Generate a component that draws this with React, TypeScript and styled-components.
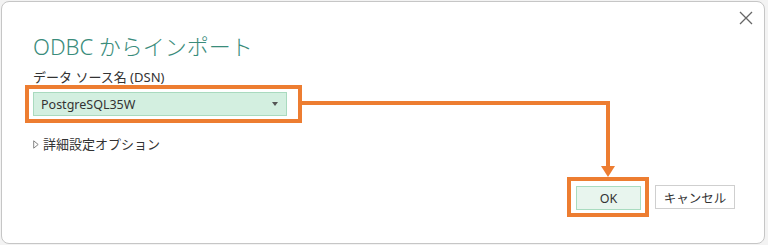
import React from 'react'
import styled, { createGlobalStyle } from 'styled-components'

const GlobalStyle = createGlobalStyle`
    html, body {
        margin: 0;
        padding: 0;
        background: #f3f3f3;
    }
    body {
        font-family: "Noto Sans", "Noto Sans CJK JP", sans-serif;
        color: #333;
    }
`

const orange = '#ed7d31'

const Page = styled.div`
    width: 768px;
    height: 245px;
    padding: 1px 0 0 1px;
    box-sizing: border-box;
`

const Dialog = styled.div`
    position: relative;
    width: 764px;
    height: 243px;
    box-sizing: border-box;
    border: 1px solid #c6c6c6;
    border-radius: 8px;
    background: #fff;
    padding: 0 29px 0 31px;
    display: flex;
    flex-direction: column;
`

const Header = styled.div`
    display: flex;
    justify-content: space-between;
    align-items: flex-start;
    margin-right: -20px;
`

const Title = styled.h1`
    margin: 30px 0 0 0;
    font-size: 22px;
    line-height: 28px;
    font-weight: 300;
    color: #3a8c7b;
`

const CloseButton = styled.button`
    margin-top: 7px;
    width: 18px;
    height: 18px;
    padding: 0;
    border: none;
    background: none;
    display: flex;
    align-items: center;
    justify-content: center;
`

const Label = styled.div`
    margin-top: 9px;
    font-size: 13px;
    line-height: 16px;
    color: #333;
`

const Highlight = styled.div<{ $pad: string; $offset?: number }>`
    display: inline-flex;
    align-self: flex-start;
    border: 4px solid ${orange};
    padding: ${p => p.$pad};
    margin-left: ${p => p.$offset ?? 0}px;
`

const Select = styled.div`
    width: 254px;
    height: 24px;
    box-sizing: border-box;
    background: #d3efe0;
    border: 1px solid #a9dabf;
    display: flex;
    align-items: center;
    justify-content: space-between;
    padding: 0 8px 0 7px;
    font-size: 12.5px;
    color: #333;
`

const Caret = styled.span`
    width: 0;
    height: 0;
    border-left: 3px solid transparent;
    border-right: 3px solid transparent;
    border-top: 4px solid #555;
`

const Advanced = styled.div`
    margin-top: 12px;
    display: flex;
    align-items: center;
    gap: 4px;
    font-size: 13px;
    line-height: 18px;
    color: #333;
`

const Footer = styled.div`
    margin-top: auto;
    margin-bottom: 26px;
    display: flex;
    justify-content: flex-end;
    align-items: center;
    gap: 6px;
`

const Button = styled.button<{ $primary?: boolean }>`
    height: 24px;
    box-sizing: border-box;
    padding: 0;
    font-family: inherit;
    font-size: 12.5px;
    color: #333;
    background: ${p => (p.$primary ? '#e8f5ee' : '#fff')};
    border: 1px solid ${p => (p.$primary ? '#a9dcc0' : '#cfcfcf')};
    width: ${p => (p.$primary ? 65 : 80)}px;
`

const Connector = styled.svg`
    position: absolute;
    left: 0;
    top: 0;
    pointer-events: none;
`

function App() {
    return (
        <Page>
            <GlobalStyle />
            <Dialog>
                <Header>
                    <Title>ODBC からインポート</Title>
                    <CloseButton aria-label="閉じる">
                        <svg width="16" height="16" viewBox="0 0 16 16">
                            <path d="M2 2 L14 14 M14 2 L2 14" stroke="#666" strokeWidth="1.3" fill="none" />
                        </svg>
                    </CloseButton>
                </Header>
                <Label>データ ソース名 (DSN)</Label>
                <Highlight $pad="3px 11px 3px 4px" $offset={-8}>
                    <Select>
                        <span>PostgreSQL35W</span>
                        <Caret />
                    </Select>
                </Highlight>
                <Advanced>
                    <svg width="6" height="9" viewBox="0 0 6 9">
                        <path d="M0.7 0.8 L5.2 4.5 L0.7 8.2 Z" stroke="#777" strokeWidth="0.9" fill="none" />
                    </svg>
                    <span>詳細設定オプション</span>
                </Advanced>
                <Footer>
                    <Highlight $pad="5px 4px 3px 5px">
                        <Button $primary>OK</Button>
                    </Highlight>
                    <Button>キャンセル</Button>
                </Footer>
                <Connector width="764" height="243">
                    <path d="M300 101 H606 V166" stroke={orange} strokeWidth="4" fill="none" />
                    <path d="M599 164 H613 L606 175 Z" fill={orange} />
                </Connector>
            </Dialog>
        </Page>
    )
}

export default App
